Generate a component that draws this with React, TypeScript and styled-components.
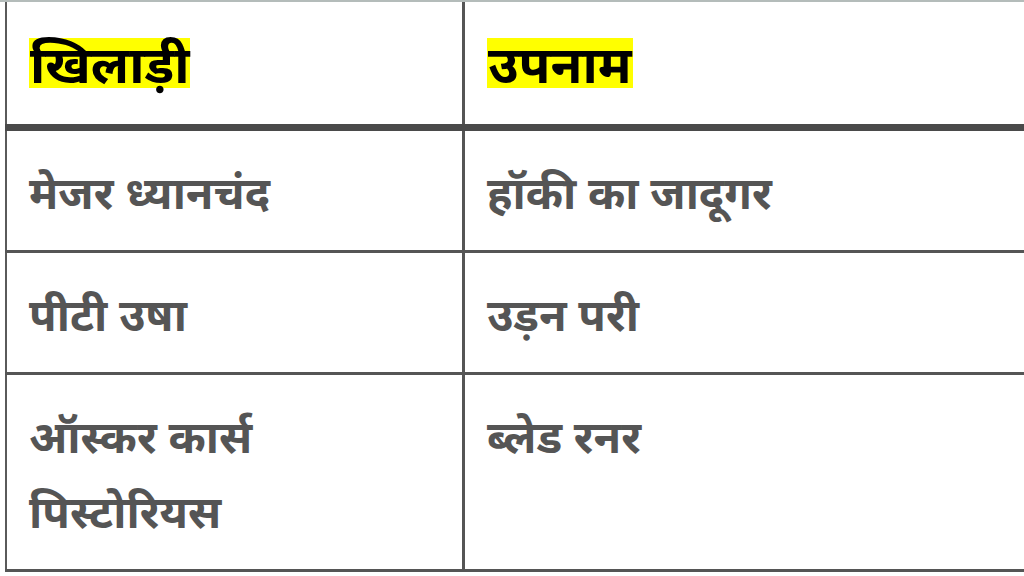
import React from "react";
import styled, { createGlobalStyle } from "styled-components";

const Global = createGlobalStyle`
  html, body { margin: 0; padding: 0; background: #ffffff; overflow: hidden; }
  body { width: 1024px; height: 576px; font-family: "Noto Sans", "Noto Sans Devanagari", "Lohit Devanagari", sans-serif; }
`;

const Page = styled.div`
  width: 1024px;
  height: 576px;
  overflow: hidden;
  border-top: 2px solid #b4bcba;
  box-sizing: border-box;
  padding-left: 5px;
`;

const Table = styled.table`
  width: 1120px;
  border-collapse: collapse;
  table-layout: fixed;
`;

const HeadCell = styled.th`
  text-align: left;
  font-weight: 700;
  color: #000;
  font-size: 52px;
  line-height: 75px;
  padding: 17px 22px 30px;
  border-left: 2px solid #5a5a5a;
  border-bottom: 7px solid #4a4a4a;
  vertical-align: top;
  &:first-child { width: 411px; }
  &:last-child { border-left: 3px solid #555; }
`;

const Mark = styled.span`
  display: inline-block;
  background: #ffff00;
  line-height: 50px;
  height: 50px;
  padding: 0 1px;
  vertical-align: middle;
`;

const Cell = styled.td`
  font-weight: 700;
  color: #555555;
  font-size: 45px;
  line-height: 75px;
  padding: 23px 22px 21px;
  border-left: 2px solid #5a5a5a;
  border-bottom: 3px solid #555;
  vertical-align: top;
  &:last-child { border-left: 3px solid #555; }
`;

const Line = styled.div`
  white-space: nowrap;
`;

const rows: { name: string[]; nick: string }[] = [
  { name: ["मेजर ध्यानचंद"], nick: "हॉकी का जादूगर" },
  { name: ["पीटी उषा"], nick: "उड़न परी" },
  { name: ["ऑस्कर कार्स", "पिस्टोरियस"], nick: "ब्लेड रनर" },
];

export default function App() {
  return (
    <>
      <Global />
      <Page>
        <Table>
          <thead>
            <tr>
              <HeadCell><Mark>खिलाड़ी</Mark></HeadCell>
              <HeadCell><Mark>उपनाम</Mark></HeadCell>
            </tr>
          </thead>
          <tbody>
            {rows.map((r) => (
              <tr key={r.nick}>
                <Cell>
                  {r.name.map((l) => (
                    <Line key={l}>{l}</Line>
                  ))}
                </Cell>
                <Cell>{r.nick}</Cell>
              </tr>
            ))}
          </tbody>
        </Table>
      </Page>
    </>
  );
}
